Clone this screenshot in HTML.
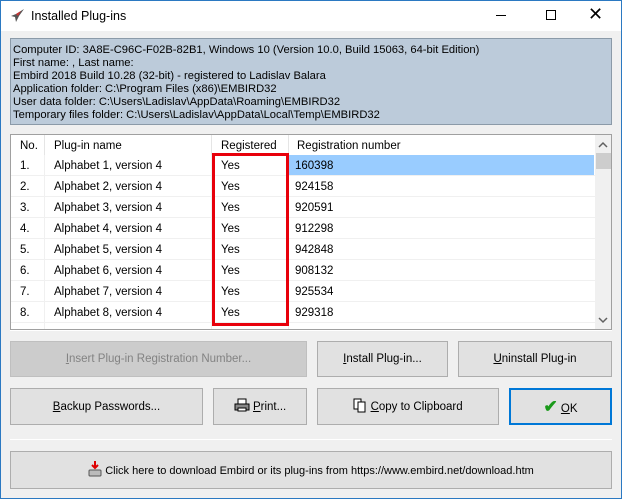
<!DOCTYPE html>
<html><head><style>
*{box-sizing:border-box;margin:0;padding:0}
body{width:622px;height:499px;background:#f0f0f0;font-family:"Liberation Sans",sans-serif;font-size:11.5px;color:#000;position:relative;overflow:hidden}
.win{position:absolute;left:0;top:0;width:622px;height:499px;border:1px solid #2b79c2}
.title{position:absolute;left:1px;top:1px;width:620px;height:30px;background:#fff}
.title .t{position:absolute;left:30px;top:8px;font-size:12.5px}
.abs{position:absolute}
.info{left:10px;top:38px;width:602px;height:87px;background:#bccbda;border:1px solid #8b9aa8;padding:5px 0 0 2px;line-height:13px;font-size:11.2px}
.tbl{left:10px;top:134px;width:602px;height:196px;background:#fff;border:1px solid #a0a0a0;overflow:hidden}
.row{position:absolute;left:0;width:584px;height:21px;border-bottom:1px solid #f0f0f0}
.row span{position:absolute;top:5px}
.btn{position:absolute;background:#e1e1e1;border:1px solid #adadad;text-align:center;font-size:11.5px}
.btn u{text-decoration:underline}
.sep{position:absolute;left:10px;width:602px;height:1px;background:#a0a0a0;border-bottom:1px solid #fff}
</style></head><body>
<div class="win"></div>
<div class="title">
<svg class="abs" style="left:8px;top:6px" width="18" height="18" viewBox="0 0 18 18"><path d="M2 9 L7 7 L15 2 L10 9 L7 15 L6 10 Z" fill="#555"/><path d="M7 7 L12 4 L9 9Z" fill="#c33"/></svg>
<div class="t">Installed Plug-ins</div>
<div class="abs" style="left:495px;top:14px;width:10px;height:1px;background:#000"></div>
<div class="abs" style="left:545px;top:9px;width:10px;height:10px;border:1px solid #000"></div>
<div class="abs" style="left:587px;top:3px;font-size:18px;">✕</div>
</div>
<div class="abs info">Computer ID: 3A8E-C96C-F02B-82B1, Windows 10 (Version 10.0, Build 15063, 64-bit Edition)<br>First name: , Last name:<br>Embird 2018 Build 10.28 (32-bit) - registered to Ladislav Balara<br>Application folder: C:\Program Files (x86)\EMBIRD32<br>User data folder: C:\Users\Ladislav\AppData\Roaming\EMBIRD32<br>Temporary files folder: C:\Users\Ladislav\AppData\Local\Temp\EMBIRD32</div>
<div class="abs tbl">
<div class="row" style="top:0;height:21px;border-bottom:none"><span style="left:9px">No.</span><span style="left:43px">Plug-in name</span><span style="left:210px">Registered</span><span style="left:286px">Registration number</span></div>
<div class="abs" style="left:33px;top:0;width:1px;height:20px;background:#e5e5e5"></div>
<div class="abs" style="left:200px;top:0;width:1px;height:20px;background:#e5e5e5"></div>
<div class="abs" style="left:277px;top:0;width:1px;height:20px;background:#e5e5e5"></div>
<div class="abs" style="left:278px;top:20px;width:305px;height:21px;background:#99ccff"></div>
<div class="row" style="top:20px"><span style="left:9px">1.</span><span style="left:43px">Alphabet 1, version 4</span><span style="left:210px">Yes</span><span style="left:284px">160398</span></div>
<div class="row" style="top:41px"><span style="left:9px">2.</span><span style="left:43px">Alphabet 2, version 4</span><span style="left:210px">Yes</span><span style="left:284px">924158</span></div>
<div class="row" style="top:62px"><span style="left:9px">3.</span><span style="left:43px">Alphabet 3, version 4</span><span style="left:210px">Yes</span><span style="left:284px">920591</span></div>
<div class="row" style="top:83px"><span style="left:9px">4.</span><span style="left:43px">Alphabet 4, version 4</span><span style="left:210px">Yes</span><span style="left:284px">912298</span></div>
<div class="row" style="top:104px"><span style="left:9px">5.</span><span style="left:43px">Alphabet 5, version 4</span><span style="left:210px">Yes</span><span style="left:284px">942848</span></div>
<div class="row" style="top:125px"><span style="left:9px">6.</span><span style="left:43px">Alphabet 6, version 4</span><span style="left:210px">Yes</span><span style="left:284px">908132</span></div>
<div class="row" style="top:146px"><span style="left:9px">7.</span><span style="left:43px">Alphabet 7, version 4</span><span style="left:210px">Yes</span><span style="left:284px">925534</span></div>
<div class="row" style="top:167px"><span style="left:9px">8.</span><span style="left:43px">Alphabet 8, version 4</span><span style="left:210px">Yes</span><span style="left:284px">929318</span></div>
<div class="abs" style="left:33px;top:20px;width:1px;height:176px;background:#f0f0f0"></div>
<div class="abs" style="left:200px;top:20px;width:1px;height:176px;background:#f0f0f0"></div>
<div class="abs" style="left:277px;top:20px;width:1px;height:176px;background:#f0f0f0"></div>
<div class="abs" style="left:584px;top:0;width:17px;height:194px;background:#f0f0f0"></div>
<div class="abs" style="left:585px;top:18px;width:15px;height:16px;background:#cdcdcd"></div>
<svg class="abs" style="left:587px;top:6px" width="10" height="8"><path d="M1 6 L5 2 L9 6" stroke="#606060" stroke-width="1.5" fill="none"/></svg>
<svg class="abs" style="left:587px;top:181px" width="10" height="8"><path d="M1 2 L5 6 L9 2" stroke="#606060" stroke-width="1.5" fill="none"/></svg>
</div>
<div class="abs" style="left:212px;top:153px;width:77px;height:173px;border:3px solid #e8000b"></div>
<div class="sep" style="top:330px"></div>
<div class="btn" style="left:10px;top:341px;width:297px;height:36px;line-height:34px;background:#cccccc;border-color:#bfbfbf;color:#838383"><u>I</u>nsert Plug-in Registration Number...</div>
<div class="btn" style="left:317px;top:341px;width:131px;height:36px;line-height:34px"><u>I</u>nstall Plug-in...</div>
<div class="btn" style="left:458px;top:341px;width:154px;height:36px;line-height:34px"><u>U</u>ninstall Plug-in</div>
<div class="btn" style="left:10px;top:388px;width:193px;height:37px;line-height:37px"><u>B</u>ackup Passwords...</div>
<div class="btn" style="left:213px;top:388px;width:94px;height:37px;line-height:37px"><svg width="16" height="14" style="vertical-align:-2px"><rect x="4" y="1" width="8" height="5" fill="#fff" stroke="#000"/><rect x="1" y="6" width="14" height="6" fill="#888" stroke="#000"/><rect x="4" y="10" width="8" height="3" fill="#fff" stroke="#000"/></svg> <u>P</u>rint...</div>
<div class="btn" style="left:317px;top:388px;width:182px;height:37px;line-height:37px"><svg width="14" height="15" style="vertical-align:-3px"><rect x="1" y="1" width="7" height="10" fill="#fff" stroke="#000"/><rect x="5" y="4" width="7" height="10" fill="#fff" stroke="#000"/></svg> <u>C</u>opy to Clipboard</div>
<div class="btn" style="left:509px;top:388px;width:103px;height:37px;line-height:33px;border:2px solid #0078d7"><span style="color:#1a9a1a;font-size:17px;font-weight:bold">✔</span> <u>O</u>K</div>
<div class="sep" style="top:439px"></div>
<div class="btn" style="left:10px;top:451px;width:602px;height:38px;line-height:38px;font-size:11px"><svg width="14" height="16" style="vertical-align:-3px"><path d="M7 0 V6 M4 4 L7 7 L10 4" stroke="#d00" stroke-width="2" fill="none"/><rect x="1" y="9" width="12" height="6" rx="1" fill="#bbb" stroke="#555"/></svg> Click here to download Embird or its plug-ins from https://www.embird.net/download.htm</div>
</body></html>
